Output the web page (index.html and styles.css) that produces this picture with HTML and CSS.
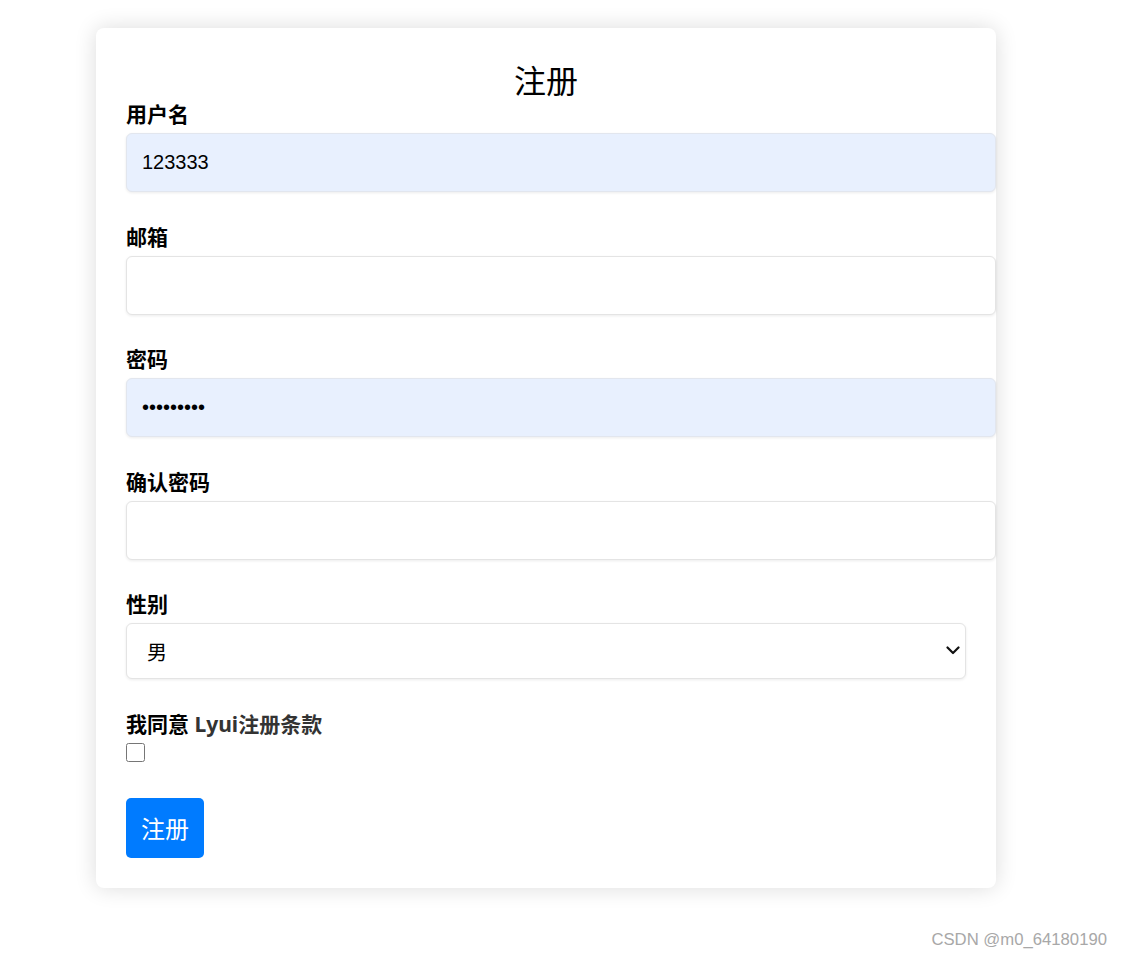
FILE: index.html
```html
<!DOCTYPE html>
<html lang="zh">
<head>
<meta charset="utf-8">
<title>注册</title>
<link rel="stylesheet" href="styles.css">
</head>
<body>
<div class="card">
  <h1 class="title">注册</h1>
  <form class="form">
    <div class="group">
      <label class="label">用户名</label>
      <input class="input filled" type="text" value="123333">
    </div>
    <div class="group">
      <label class="label">邮箱</label>
      <input class="input" type="text" value="">
    </div>
    <div class="group">
      <label class="label">密码</label>
      <input class="input filled" type="password" value="123456789">
    </div>
    <div class="group">
      <label class="label">确认密码</label>
      <input class="input" type="password" value="">
    </div>
    <div class="group">
      <label class="label">性别</label>
      <div class="select-wrap">
        <select class="select">
          <option>男</option>
          <option>女</option>
        </select>
        <svg class="chevron" width="14" height="9" viewBox="0 0 14 9" aria-hidden="true">
          <path d="M1.5 1.5 L7 7 L12.5 1.5" fill="none" stroke="#111" stroke-width="2.2" stroke-linecap="round" stroke-linejoin="round"/>
        </svg>
      </div>
    </div>
    <div class="group group-check">
      <label class="label">我同意 <span class="terms">Lyui注册条款</span></label>
      <input class="check" type="checkbox">
    </div>
    <button class="btn" type="button">注册</button>
  </form>
</div>
<div class="watermark">CSDN @m0_64180190</div>
</body>
</html>
```

FILE: styles.css
```css
html, body {
  margin: 0;
  padding: 0;
  background: #fff;
}

body {
  font-family: "Noto Sans", "Noto Sans CJK SC", sans-serif;
  color: #000;
}

.card {
  width: 840px;
  padding: 30px;
  margin: 28px 0 0 96px;
  background: #fff;
  border-radius: 8px;
  box-shadow: 0 0 22px rgba(0, 0, 0, 0.14);
}

.title {
  margin: 0;
  font-family: "Noto Sans CJK SC", sans-serif;
  font-size: 32px;
  font-weight: 400;
  line-height: 43px;
  text-align: center;
}

.form {
  margin: 0;
}

.group {
  margin-bottom: 31.5px;
}

.label {
  display: block;
  margin-bottom: 7px;
  padding-top: 1px;
  font-family: "Noto Sans", "Noto Sans CJK SC", sans-serif;
  font-size: 21px;
  font-weight: 700;
  line-height: 24px;
}

.terms {
  color: #333;
}

.input {
  display: block;
  box-sizing: border-box;
  width: calc(100% + 30px);
  height: 59px;
  margin: 0;
  padding: 16px 15px;
  font-family: "Liberation Sans", Arial, sans-serif;
  font-size: 20px;
  line-height: 25px;
  color: #000;
  background: #fff;
  border: 1px solid #e4e4e4;
  border-radius: 6px;
  box-shadow: 0 1px 3px rgba(0, 0, 0, 0.08);
  outline: none;
}

.input.filled {
  background: #e8f0fe;
  border-color: #e2e6ee;
}

.select-wrap {
  position: relative;
}

.select {
  display: block;
  width: 100%;
  height: 56px;
  margin: 0;
  padding: 0 30px 0 20px;
  font-family: "Noto Sans CJK SC", sans-serif;
  font-size: 20px;
  color: #000;
  background: #fff;
  border: 1px solid #e4e4e4;
  border-radius: 6px;
  box-shadow: 0 1px 3px rgba(0, 0, 0, 0.08);
  outline: none;
  -webkit-appearance: none;
  appearance: none;
}

.chevron {
  position: absolute;
  right: 6px;
  top: 23px;
  pointer-events: none;
}

.check {
  display: block;
  width: 19px;
  height: 19px;
  margin: 0;
}

.group-check {
  margin-bottom: 36px;
}

.btn {
  display: block;
  margin: 0;
  padding: 0 15px;
  height: 60px;
  font-family: "Noto Sans CJK SC", sans-serif;
  font-size: 24px;
  color: #fff;
  background: #007bff;
  border: none;
  border-radius: 5px;
}

.watermark {
  margin-top: 42px;
  padding-right: 15px;
  text-align: right;
  font-family: "Liberation Sans", Arial, sans-serif;
  font-size: 16.7px;
  color: #a8a8a8;
}
```
